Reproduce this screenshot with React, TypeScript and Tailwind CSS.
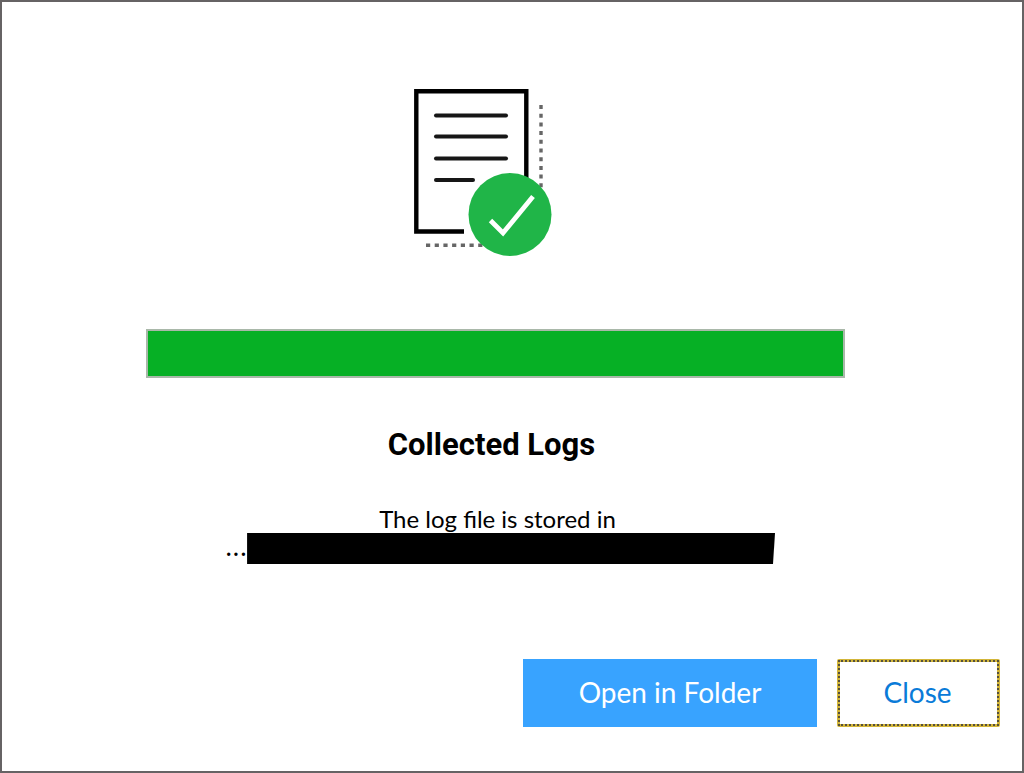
import React from "react";

const DocumentIcon: React.FC = () => (
  <svg
    width="138"
    height="170"
    viewBox="0 0 138 170"
    fill="none"
    aria-hidden="true"
    className="shrink-0"
  >
    {/* Dotted shadow */}
    <g stroke="#666" strokeWidth="3.4">
      <path d="M127 17V104" strokeDasharray="4 4.7" />
      <path d="M12 157.3H72" strokeDasharray="4.2 4.5" />
    </g>
    {/* Page */}
    <path d="M50 143.5H2.3V3.3H112.3V95" stroke="#000" strokeWidth="4.4" />
    <g stroke="#161616" strokeWidth="4" strokeLinecap="round">
      <path d="M22 27.5H92" />
      <path d="M22 48.5H92" />
      <path d="M22 70.5H92" />
      <path d="M22 92H59" />
    </g>
    {/* Check badge */}
    <circle cx="96" cy="126.5" r="41.5" fill="#20b548" />
    <path d="M76.5 132.5L89 145L119 108.5" stroke="#fff" strokeWidth="4.8" />
  </svg>
);

const CollectedLogs: React.FC = () => {
  return (
    <main className="flex min-h-screen flex-col border-2 border-[#666364] bg-white text-black">
      {/* Status */}
      <section className="mr-[177px] ml-[144px] flex flex-col items-center pt-[86px]">
        <div className="mr-[26px]">
          <DocumentIcon />
        </div>
        <div
          role="progressbar"
          aria-label="Collecting logs"
          aria-valuemin={0}
          aria-valuemax={100}
          aria-valuenow={100}
          className="mt-[71px] h-[49px] w-full border-2 border-[#a9b8a9] bg-[#06b025]"
        />
        <h1 className="mt-[49px] mr-2 font-['Roboto','Liberation_Sans',sans-serif] text-[31px] leading-9 font-bold">
          Collected Logs
        </h1>
        <p className="mt-[42px] ml-1 font-['Lato','Liberation_Sans',sans-serif] text-2xl leading-7">
          The log file is stored in
        </p>
        <div className="flex h-[31px] w-full pr-[70px] pl-[79px]">
          <span className="font-['Open_Sans','Liberation_Sans',sans-serif] text-[28px] leading-6">
            ...
          </span>
          <span
            aria-label="Hidden path"
            className="flex-1 bg-black [clip-path:polygon(0_0,100%_0,calc(100%-2px)_100%,0_100%)]"
          />
        </div>
      </section>

      {/* Actions */}
      <footer className="mt-auto flex justify-end gap-5 pr-[22px] pb-11 font-['Lato','Liberation_Sans',sans-serif] text-[28px]">
        <button type="button" className="h-[68px] w-[294px] bg-[#38a3ff] pb-0.5 text-white">
          Open in Folder
        </button>
        <div className="rounded-xs bg-[#d3b63a] p-px">
          <button
            type="button"
            className="h-[66px] w-[161px] border-2 border-dotted border-[#55503c] pr-0.5 pb-0.5 text-[#0a7bd8] [background:linear-gradient(#fff,#fff)_padding-box,linear-gradient(#d3b63a,#d3b63a)_border-box]"
          >
            Close
          </button>
        </div>
      </footer>
    </main>
  );
};

export default CollectedLogs;
